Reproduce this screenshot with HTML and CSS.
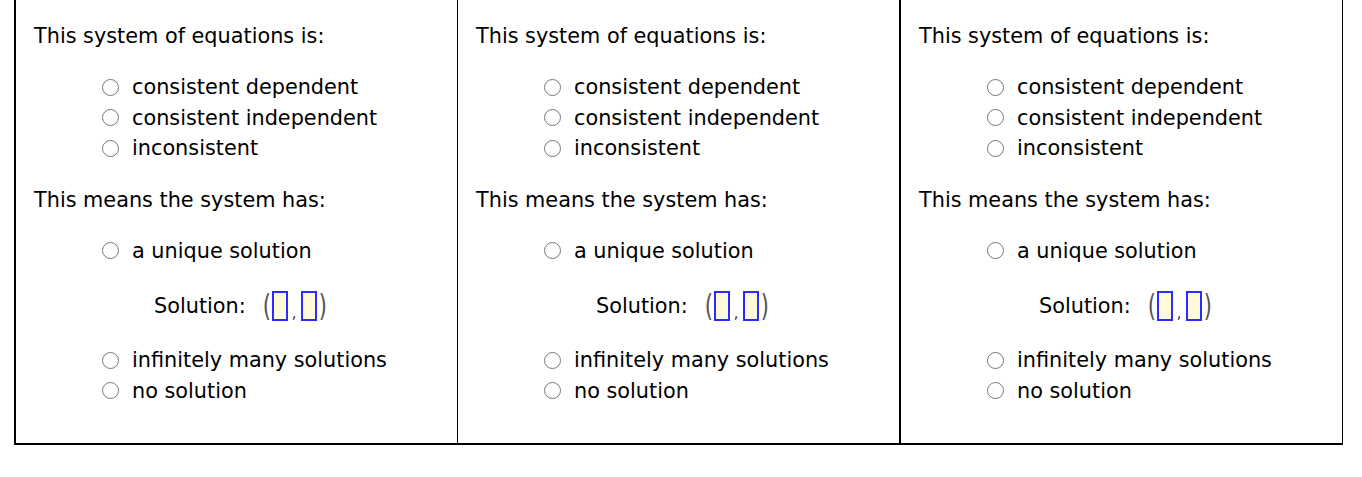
FILE: index.html
```html
<!DOCTYPE html>
<html>
<head>
<meta charset="utf-8">
<link rel="stylesheet" href="styles.css">
</head>
<body>
<div class="grid">
  <div class="cell c1">
    <p class="q">This system of equations is:</p>
    <div class="opts">
      <div class="opt"><span class="radio"></span>consistent dependent</div>
      <div class="opt"><span class="radio"></span>consistent independent</div>
      <div class="opt"><span class="radio"></span>inconsistent</div>
    </div>
    <p class="q q2">This means the system has:</p>
    <div class="opts">
      <div class="opt"><span class="radio"></span>a unique solution</div>
    </div>
    <div class="sol">Solution:<span class="pt"><span class="paren">(</span><span class="box"></span><span class="comma">,</span><span class="box"></span><span class="paren">)</span></span></div>
    <div class="opts opts3">
      <div class="opt"><span class="radio"></span>infinitely many solutions</div>
      <div class="opt"><span class="radio"></span>no solution</div>
    </div>
  </div>
  <div class="cell c2">
    <p class="q">This system of equations is:</p>
    <div class="opts">
      <div class="opt"><span class="radio"></span>consistent dependent</div>
      <div class="opt"><span class="radio"></span>consistent independent</div>
      <div class="opt"><span class="radio"></span>inconsistent</div>
    </div>
    <p class="q q2">This means the system has:</p>
    <div class="opts">
      <div class="opt"><span class="radio"></span>a unique solution</div>
    </div>
    <div class="sol">Solution:<span class="pt"><span class="paren">(</span><span class="box"></span><span class="comma">,</span><span class="box"></span><span class="paren">)</span></span></div>
    <div class="opts opts3">
      <div class="opt"><span class="radio"></span>infinitely many solutions</div>
      <div class="opt"><span class="radio"></span>no solution</div>
    </div>
  </div>
  <div class="cell c3">
    <p class="q">This system of equations is:</p>
    <div class="opts">
      <div class="opt"><span class="radio"></span>consistent dependent</div>
      <div class="opt"><span class="radio"></span>consistent independent</div>
      <div class="opt"><span class="radio"></span>inconsistent</div>
    </div>
    <p class="q q2">This means the system has:</p>
    <div class="opts">
      <div class="opt"><span class="radio"></span>a unique solution</div>
    </div>
    <div class="sol">Solution:<span class="pt"><span class="paren">(</span><span class="box"></span><span class="comma">,</span><span class="box"></span><span class="paren">)</span></span></div>
    <div class="opts opts3">
      <div class="opt"><span class="radio"></span>infinitely many solutions</div>
      <div class="opt"><span class="radio"></span>no solution</div>
    </div>
  </div>
</div>
</body>
</html>
```
FILE: styles.css
```css
html, body {
  margin: 0;
  padding: 0;
  background: #fff;
}
body {
  font-family: "DejaVu Sans", Verdana, sans-serif;
  font-size: 20.8px;
  color: #000;
}
.grid {
  display: grid;
  grid-template-columns: 442px 443px 441px;
  margin-left: 14px;
  width: 1326px;
  border-left: 2px solid #000;
  border-right: 1px solid #000;
  border-bottom: 2px solid #000;
}
.cell {
  height: 443px;
  box-sizing: border-box;
  padding: 21px 0 0 18px;
}
.c1 { border-right: 1px solid #000; }
.c2 { border-right: 2px solid #000; }
.q {
  margin: 0;
  line-height: 30px;
}
.q2 { margin-top: 21px; }
.opts {
  margin-top: 21px;
  padding-left: 68px;
}
.opt {
  display: flex;
  align-items: center;
  height: 30.5px;
}
.radio {
  width: 15px;
  height: 15px;
  border: 1.5px solid #777;
  border-radius: 50%;
  margin-right: 13px;
  flex: none;
}
.sol {
  margin: 23px 0 0 120px;
  display: flex;
  align-items: center;
  height: 34px;
}
.opts3 { margin-top: 22px; }
.pt {
  display: flex;
  align-items: center;
  margin-left: 15px;
}
.paren {
  color: #555;
  font-size: 30px;
  line-height: 30px;
  transform: scaleX(0.7);
}
.box {
  width: 12px;
  height: 26px;
  border: 2px solid #2b2bff;
  background: #fef9d6;
}
.comma {
  font-size: 16px;
  color: #444;
  margin: 12px 4px 0 3px;
}
```
